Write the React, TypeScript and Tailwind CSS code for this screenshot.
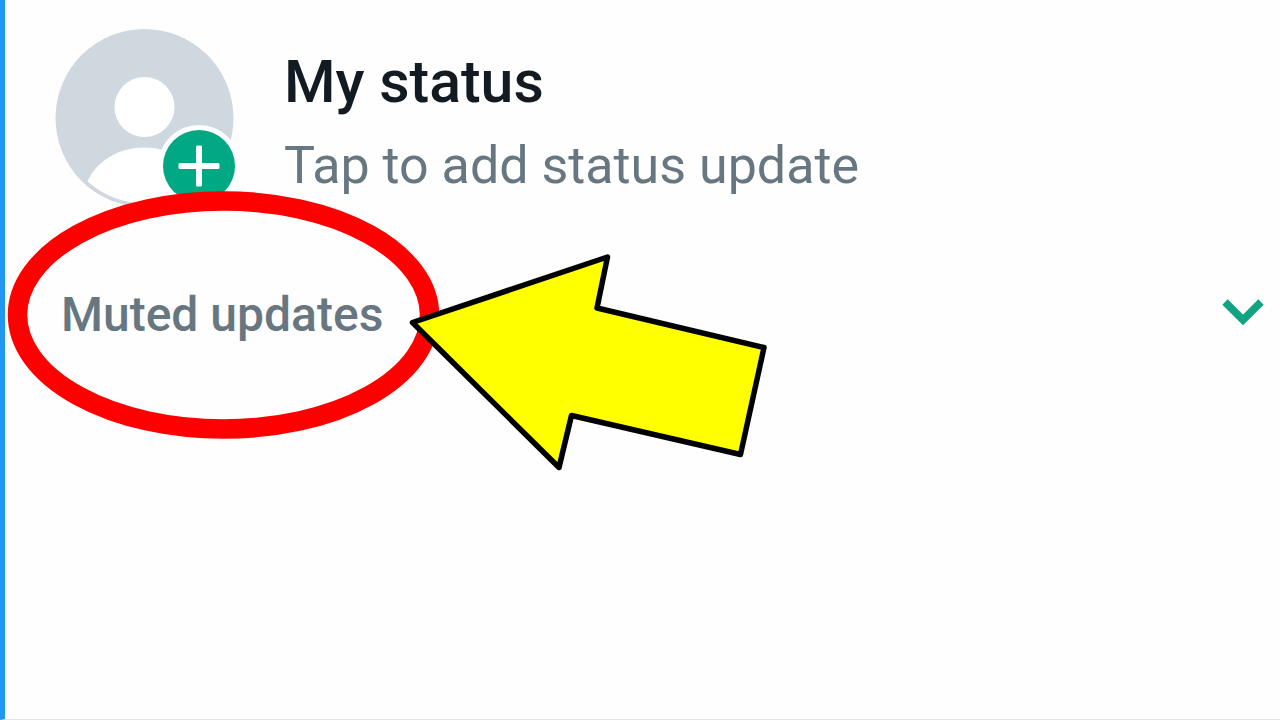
import { useState } from 'react'

function Avatar() {
  return (
    <svg className="w-[184px] h-[180px] shrink-0" viewBox="0 0 184 180" aria-hidden="true">
      <circle cx="89.500" cy="90" r="89" fill="#cfd8df" />
      <circle cx="89.500" cy="79" r="30" fill="#fff" />
      <path d="M32.500 153.500C42 132 65 119.500 89.500 119.500S138 133 147 153.500A86.500 87 0 0 1 32.500 153.500Z" fill="#fff" />
      <circle cx="144" cy="138" r="41" fill="#fff" />
      <circle cx="144" cy="138" r="36" fill="#00a884" />
      <rect x="123.500" y="135" width="41" height="6" rx="1.500" fill="#fff" />
      <rect x="141" y="117.500" width="6" height="41" rx="1.500" fill="#fff" />
    </svg>
  )
}

function Chevron({ open }: { open: boolean }) {
  return (
    <svg className={open ? 'w-[42px] h-8 rotate-180' : 'w-[42px] h-8'} viewBox="0 0 42 32" aria-hidden="true">
      <path d="M3 3L21 21L39 3" fill="none" stroke="#0fa482" strokeWidth="7.500" />
    </svg>
  )
}

// red ring and arrow drawn over the muted row
function Callout() {
  return (
    <svg
      className="absolute left-0 -top-8 w-[780px] h-[300px] pointer-events-none"
      viewBox="0 0 780 300"
      aria-hidden="true"
    >
      <ellipse cx="218.500" cy="139" rx="206" ry="114" fill="none" stroke="#ff0000" strokeWidth="19.500" />
      <path
        d="M407.500 146.500L602.500 81L592 132L759 171.500L735.500 278.500L566.500 239.500L554 291.500Z"
        fill="#ffff00"
        stroke="#000"
        strokeWidth="5.500"
        strokeLinejoin="round"
      />
    </svg>
  )
}

export default function App() {
  const [open, setOpen] = useState(false)

  return (
    <main className="min-h-screen overflow-x-hidden bg-[#fefefe] border-l-[5px] border-l-[#2196f3] border-b border-b-[#e4e6e6] font-['Roboto',sans-serif]">
      <button className="flex w-full items-start gap-[45px] pl-[50px] pt-7 text-left">
        <Avatar />
        <span className="flex flex-col pt-5">
          <span className="text-[59px] leading-[68px] font-medium text-[#111b21]">My status</span>
          <span className="mt-[18px] text-[52px] leading-[64px] text-[#667781]">Tap to add status update</span>
        </span>
      </button>

      <section className="relative">
        <button
          onClick={() => setOpen(!open)}
          aria-expanded={open}
          className="flex w-full items-center justify-between pl-14 pr-4 pt-[71px] pb-16"
        >
          <span className="text-[48px] leading-[72px] font-medium text-[#667781]">Muted updates</span>
          <Chevron open={open} />
        </button>
        <Callout />
      </section>
    </main>
  )
}
